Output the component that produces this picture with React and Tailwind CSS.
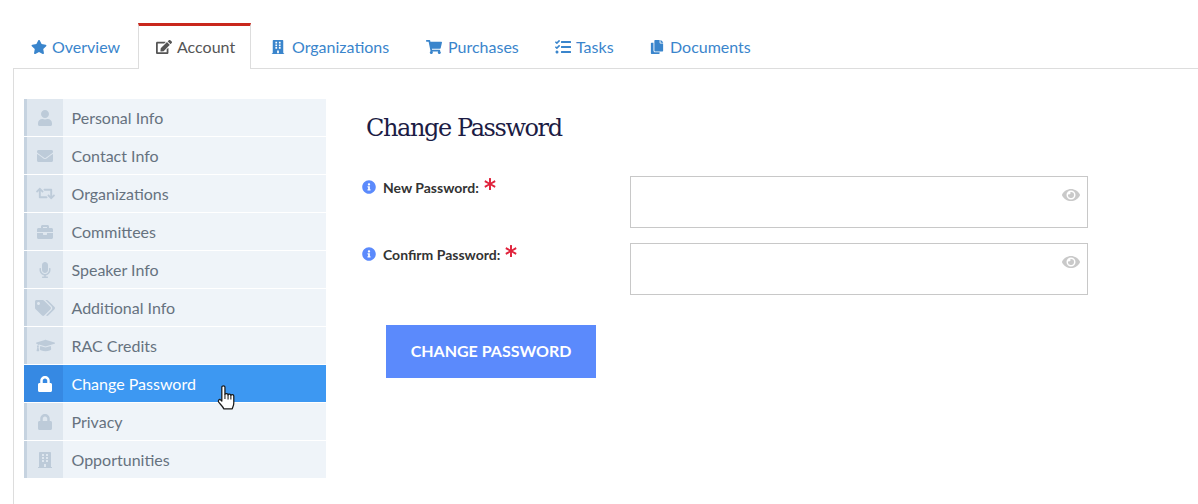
import React from 'react';
import {
  FaStar, FaEdit, FaBuilding, FaShoppingCart, FaTasks, FaCopy, FaUser, FaEnvelope, FaRetweet,
  FaBriefcase, FaMicrophone, FaTags, FaGraduationCap, FaLock, FaInfoCircle, FaEye, FaAsterisk,
} from 'react-icons/fa';

const tabs = [
  { label: 'Overview', icon: FaStar, w: 'w-[125px]', pl: 'pl-[18px]', gap: 'gap-[5px]', size: 16 },
  { label: 'Account', icon: FaEdit, active: true, w: 'w-[113px]', pl: 'pl-[17px]', gap: 'gap-[5px]', size: 16 },
  { label: 'Organizations', icon: FaBuilding, w: 'w-[157px]', pl: 'pl-[20px]', gap: 'gap-[7px]', size: 14 },
  { label: 'Purchases', icon: FaShoppingCart, w: 'w-[129px]', pl: 'pl-[18px]', gap: 'gap-[6px]', size: 16 },
  { label: 'Tasks', icon: FaTasks, w: 'w-[95px]', pl: 'pl-[18px]', gap: 'gap-[5px]', size: 16 },
  { label: 'Documents', icon: FaCopy, w: 'w-[150px]', pl: 'pl-[18px]', gap: 'gap-[6px]', size: 14 },
];

const menu = [
  { label: 'Personal Info', icon: FaUser, size: 16 },
  { label: 'Contact Info', icon: FaEnvelope, size: 16 },
  { label: 'Organizations', icon: FaRetweet, size: 19 },
  { label: 'Committees', icon: FaBriefcase, size: 16 },
  { label: 'Speaker Info', icon: FaMicrophone, size: 16 },
  { label: 'Additional Info', icon: FaTags, size: 20 },
  { label: 'RAC Credits', icon: FaGraduationCap, size: 19 },
  { label: 'Change Password', icon: FaLock, size: 16, active: true },
  { label: 'Privacy', icon: FaLock, size: 16 },
  { label: 'Opportunities', icon: FaBuilding, size: 16 },
];

function HandCursor() {
  return (
    <svg width="19" height="25" viewBox="0 0 18 24" className="absolute left-[145px] top-[13px]">
      <path
        d="M4.5 13V2C4.5.5 7.5.5 7.5 2V9C7.5 8 10.5 8 10.5 9.5 10.5 8.5 13.2 8.5 13.2 10 13.2 9 16 9 16 10.5V17C16 20 15 21 14.5 23H6.5C5.5 20.5 3.5 19 1.5 16.5.5 15 2 13.5 3 14L4.5 15.5Z"
        fill="#ffffff"
        stroke="#1a1a1a"
        strokeWidth="1.2"
        strokeLinejoin="round"
      />
      <path d="M7.5 9V13.5M10.5 9.5V14M13.2 10V14" fill="none" stroke="#1a1a1a" strokeWidth="1" />
    </svg>
  );
}

function Tab({ tab }) {
  const Icon = tab.icon;
  if (tab.active) {
    return (
      <div className={`${tab.w} ${tab.pl} ${tab.gap} h-[46px] pb-[2px] -mb-px flex items-center bg-white border-t-[3px] border-t-[#c9281c] border-x border-x-[#dddddd] text-[#555555]`}>
        <Icon size={tab.size} />
        <span>{tab.label}</span>
      </div>
    );
  }
  return (
    <div className={`${tab.w} ${tab.pl} ${tab.gap} h-[45px] pt-[3px] flex items-center text-[#3a85cc]`}>
      <Icon size={tab.size} />
      <span>{tab.label}</span>
    </div>
  );
}

function MenuRow({ item }) {
  const Icon = item.icon;
  return (
    <div className={`h-[37px] mb-px flex items-center ${item.active ? 'bg-[#3d98f2] text-white' : 'bg-[#eff4f9] text-[#66727f]'}`}>
      <div className={`w-[39px] h-full flex items-center justify-center border-l-[3px] ${item.active ? 'bg-[#3689e3] border-l-[#3689e3] text-white' : 'bg-[#dfe7ef] border-l-[#c6d3e0] text-[#bdcbd9]'}`}>
        <Icon size={item.size} />
      </div>
      <span className="ml-[8.5px] relative">
        {item.label}
        {item.active && <HandCursor />}
      </span>
    </div>
  );
}

function PasswordField({ label }) {
  return (
    <div className="grid grid-cols-[268px_458px] mb-[15px]">
      <div className="flex items-start pt-[3px] text-[14px] font-bold text-[#333333]">
        <FaInfoCircle size={14} className="text-[#5b8afc] mt-[1px] mr-[7px] shrink-0" />
        <span className="leading-[18px]">{label}</span>
        <FaAsterisk size={12} className="text-[#e0233c] ml-[5px] -mt-[1px]" />
      </div>
      <div className="relative h-[52px] border border-[#c8c8c8] bg-white">
        <FaEye size={18} className="absolute right-[7px] top-[9px] text-[#c9c9c9]" />
      </div>
    </div>
  );
}

export default function App() {
  return (
    <div className="w-[1198px] h-[504px] bg-white overflow-hidden font-['Lato','Open_Sans',sans-serif] text-[16px]">
      <div className="pt-[23px] pl-[13px]">
        <div className="flex items-end border-b border-[#dddddd]">
          {tabs.map((t) => <Tab key={t.label} tab={t} />)}
        </div>
        <div className="flex border-l border-[#dddddd] pt-[30px] pl-[10px] h-[436px]">
          <div className="w-[302px] shrink-0">
            {menu.map((m) => <MenuRow key={m.label + (m.active ? '-active' : '')} item={m} />)}
          </div>
          <div className="pl-[36px]">
            <h2 className="pl-[4px] pt-[13px] h-[77px] text-[24px] leading-[32px] text-[#1c1c44] font-['DejaVu_Serif',serif] tracking-[-1.4px]">Change Password</h2>
            <PasswordField label="New Password:" />
            <PasswordField label="Confirm Password:" />
            <button className="ml-[24px] mt-[15px] w-[210px] h-[53px] pb-[2px] bg-[#5b8afc] text-white font-bold text-[16px] uppercase">Change Password</button>
          </div>
        </div>
      </div>
    </div>
  );
}
